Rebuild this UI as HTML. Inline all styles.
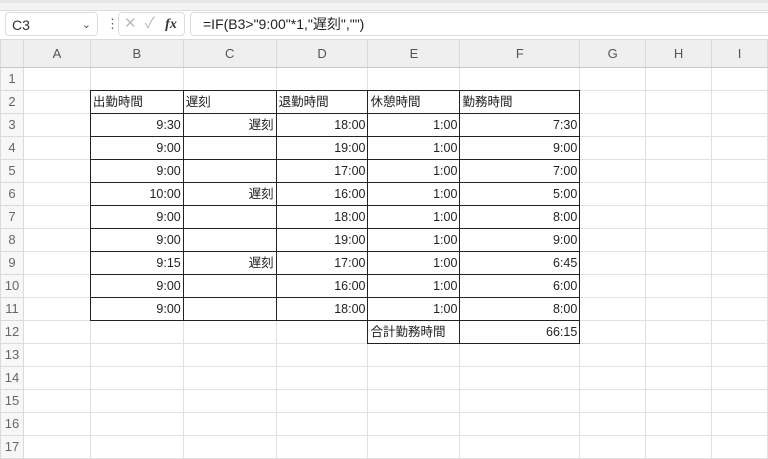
<!DOCTYPE html><html><head><meta charset="utf-8"><style>
body{margin:0;width:768px;height:450px;overflow:hidden;background:#fff;font-family:"Liberation Sans","Noto Sans CJK JP",sans-serif;position:relative}
.top{position:absolute;left:0;top:0;width:768px;height:10px;background:#f3f3f3;border-bottom:1px solid #ddd}
.top:before{content:"";position:absolute;left:0;top:0;width:768px;height:3px;background:#e6e6e6}
.bar{position:absolute;top:11px;left:0;width:768px;height:28px;background:#fff;border-bottom:1px solid #ddd}
.nb{position:absolute;left:5px;top:1px;width:93px;height:24px;border:1px solid #ddd;border-radius:4px;font-size:14px;line-height:24px;color:#333;box-sizing:border-box;padding-left:6px}
.nb span{position:absolute;right:6px;top:0;font-size:11px;color:#555}
.fx{position:absolute;left:118px;top:1px;width:67px;height:24px;border:1px solid #ddd;border-radius:4px;box-sizing:border-box;color:#bbb;font-size:15px;line-height:22px}
.fb{position:absolute;left:190px;top:1px;width:590px;height:24px;border:1px solid #ddd;border-radius:4px;box-sizing:border-box;font-size:14px;line-height:23px;padding-left:12px;color:#222}
table{position:absolute;left:0;top:39px;border-collapse:collapse;table-layout:fixed;font-size:12.5px;color:#222}
td{height:22px;border:1px solid #e1e1e1;padding:0 2px;overflow:hidden;white-space:nowrap;line-height:22px}
tr.h td{height:27px;background:#efefef;color:#555;text-align:center;font-size:13px;border-color:#dadada;border-bottom:1px solid #c8c8c8}
td.r{background:#f7f7f7;color:#666;text-align:center;font-size:13px;border-color:#dadada;padding:0}
.n{text-align:right}
.b{border:1px double #222}
</style></head><body>
<div class="top"></div>
<div class="bar">
<div class="nb">C3<span>&#8964;</span></div>
<div style="position:absolute;left:106px;top:5px;font-size:13px;color:#555">⋮</div>
<div class="fx"><span style="margin-left:5px">✕</span> <span style="margin-left:4px">✓</span> <i style="font-family:'Liberation Serif',serif;color:#333;font-weight:bold;margin-left:6px;font-size:14px">fx</i></div>
<div class="fb">=IF(B3&gt;"9:00"*1,"遅刻","")</div>
</div>
<table>
<colgroup><col style="width:23px"><col style="width:67px"><col style="width:93px"><col style="width:93px"><col style="width:92px"><col style="width:92px"><col style="width:120px"><col style="width:66px"><col style="width:66px"><col style="width:56px"></colgroup>
<tr class="h"><td></td><td>A</td><td>B</td><td>C</td><td>D</td><td>E</td><td>F</td><td>G</td><td>H</td><td>I</td></tr>
<tr><td class="r">1</td><td></td><td></td><td></td><td></td><td></td><td></td><td></td><td></td><td></td></tr>
<tr><td class="r">2</td><td></td><td class="b">出勤時間</td><td class="b">遅刻</td><td class="b">退勤時間</td><td class="b">休憩時間</td><td class="b">勤務時間</td><td></td><td></td><td></td></tr>
<tr><td class="r">3</td><td></td><td class="b n">9:30</td><td class="b n">遅刻</td><td class="b n">18:00</td><td class="b n">1:00</td><td class="b n">7:30</td><td></td><td></td><td></td></tr>
<tr><td class="r">4</td><td></td><td class="b n">9:00</td><td class="b n"></td><td class="b n">19:00</td><td class="b n">1:00</td><td class="b n">9:00</td><td></td><td></td><td></td></tr>
<tr><td class="r">5</td><td></td><td class="b n">9:00</td><td class="b n"></td><td class="b n">17:00</td><td class="b n">1:00</td><td class="b n">7:00</td><td></td><td></td><td></td></tr>
<tr><td class="r">6</td><td></td><td class="b n">10:00</td><td class="b n">遅刻</td><td class="b n">16:00</td><td class="b n">1:00</td><td class="b n">5:00</td><td></td><td></td><td></td></tr>
<tr><td class="r">7</td><td></td><td class="b n">9:00</td><td class="b n"></td><td class="b n">18:00</td><td class="b n">1:00</td><td class="b n">8:00</td><td></td><td></td><td></td></tr>
<tr><td class="r">8</td><td></td><td class="b n">9:00</td><td class="b n"></td><td class="b n">19:00</td><td class="b n">1:00</td><td class="b n">9:00</td><td></td><td></td><td></td></tr>
<tr><td class="r">9</td><td></td><td class="b n">9:15</td><td class="b n">遅刻</td><td class="b n">17:00</td><td class="b n">1:00</td><td class="b n">6:45</td><td></td><td></td><td></td></tr>
<tr><td class="r">10</td><td></td><td class="b n">9:00</td><td class="b n"></td><td class="b n">16:00</td><td class="b n">1:00</td><td class="b n">6:00</td><td></td><td></td><td></td></tr>
<tr><td class="r">11</td><td></td><td class="b n">9:00</td><td class="b n"></td><td class="b n">18:00</td><td class="b n">1:00</td><td class="b n">8:00</td><td></td><td></td><td></td></tr>
<tr><td class="r">12</td><td></td><td></td><td></td><td></td><td class="b">合計勤務時間</td><td class="b n">66:15</td><td></td><td></td><td></td></tr>
<tr><td class="r">13</td><td></td><td></td><td></td><td></td><td></td><td></td><td></td><td></td><td></td></tr>
<tr><td class="r">14</td><td></td><td></td><td></td><td></td><td></td><td></td><td></td><td></td><td></td></tr>
<tr><td class="r">15</td><td></td><td></td><td></td><td></td><td></td><td></td><td></td><td></td><td></td></tr>
<tr><td class="r">16</td><td></td><td></td><td></td><td></td><td></td><td></td><td></td><td></td><td></td></tr>
<tr><td class="r">17</td><td></td><td></td><td></td><td></td><td></td><td></td><td></td><td></td><td></td></tr>
</table>
</body></html>
